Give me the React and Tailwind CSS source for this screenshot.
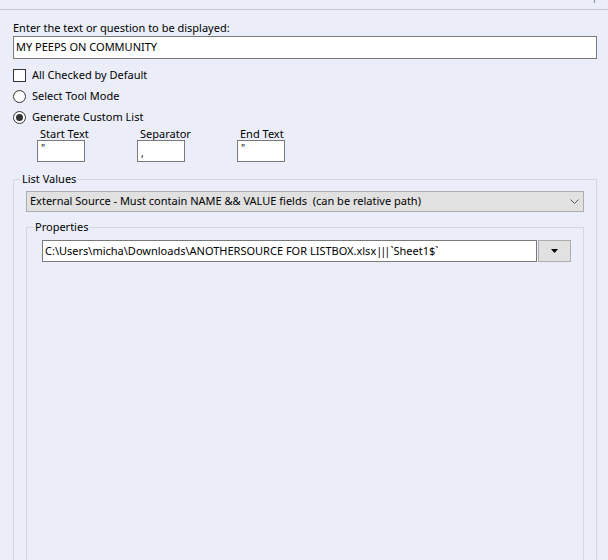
// Custom list settings panel, drawn in the WinForms look:
// prompt field, check/radio options, delimiter boxes and the list-values group.

const FONT = "font-['Segoe_UI','Noto_Sans',sans-serif]";

function CheckRow({ label }) {
  return (
    <label className="flex h-[21px] items-center gap-[6px]">
      <span className="h-[13px] w-[13px] shrink-0 border border-[#333333] bg-white" />
      <span>{label}</span>
    </label>
  );
}

function RadioRow({ label, checked }) {
  return (
    <label className="flex h-[21px] items-center gap-[6px]">
      <span className="flex h-[13px] w-[13px] shrink-0 items-center justify-center rounded-full border border-[#333333] bg-white">
        {checked && <span className="h-[7px] w-[7px] rounded-full bg-[#333333]" />}
      </span>
      <span>{label}</span>
    </label>
  );
}

function SmallField({ label, value, low }) {
  return (
    <div className="flex w-[100px] flex-col">
      <span className="pl-[3px] leading-[12px]">{label}</span>
      <div
        className={`flex h-[22px] w-[48px] border border-[#7a7a7a] bg-white px-[3px] text-[10px] leading-none ${low ? 'items-end pb-[3px]' : 'items-start pt-[2px]'}`}
      >
        {value}
      </div>
    </div>
  );
}

export default function App() {
  return (
    <div className={`h-[560px] overflow-hidden bg-[#ebeef9] text-[11px] text-black ${FONT}`}>
      {/* strip of the parent window above */}
      <div className="flex h-[10px] justify-end border-b border-[#c6cad3] pr-[13px]">
        <span className="h-[3px] w-[1px] bg-[#7d8fb0]" />
      </div>

      <div className="flex flex-col pl-[13px] pr-[11px]">
        <span className="mt-[10px] leading-4">Enter the text or question to be displayed:</span>
        <div className="flex h-[23px] items-center border border-[#7a7a7a] bg-white px-[2px]">
          MY PEEPS ON COMMUNITY
        </div>

        <div className="mt-[6px] flex flex-col">
          <CheckRow label="All Checked by Default" />
          <RadioRow label="Select Tool Mode" />
          <RadioRow label="Generate Custom List" checked />
        </div>

        <div className="flex pl-[24px]">
          <SmallField label="Start Text" value={'"'} />
          <SmallField label="Separator" value="," low />
          <SmallField label="End Text" value={'"'} />
        </div>

        <fieldset className="mt-[9px] h-[420px] border border-[#d4d7dd] p-0">
          <legend className="ml-[7px] px-[1px] leading-4">List Values</legend>
          <div className="flex flex-col px-[12px]">
            <div className="mt-[4px] flex h-[21px] items-center justify-between border border-[#adadad] bg-[#e1e1e1] pl-[3px] pr-[4px]">
              <span className="whitespace-pre">External Source - Must contain NAME &amp;&amp; VALUE fields  (can be relative path)</span>
              <svg width="9" height="6" viewBox="0 0 9 6" fill="none" stroke="#555555" strokeWidth="1">
                <path d="M0.5 0.5 L4.5 4.5 L8.5 0.5" />
              </svg>
            </div>

            <fieldset className="mt-[7px] h-[380px] border border-[#d4d7dd] p-0">
              <legend className="ml-[7px] px-[1px] leading-4">Properties</legend>
              <div className="mt-[5px] flex gap-[1px] pl-[15px] pr-[12px]">
                <div className="flex h-[22px] flex-1 items-center border border-[#7a7a7a] bg-white px-[2px] whitespace-nowrap">
                  C:\Users\micha\Downloads\ANOTHERSOURCE FOR LISTBOX.xlsx
                  <span className="tracking-[-2px]">|||</span>
                  <span className="pl-[2px]">`Sheet1$`</span>
                </div>
                <button
                  type="button"
                  className="flex h-[22px] w-[33px] items-center justify-center border border-[#adadad] bg-[#e1e1e1]"
                >
                  <svg width="7" height="4" viewBox="0 0 7 4">
                    <path d="M0 0 H7 L3.5 4 Z" fill="#000000" />
                  </svg>
                </button>
              </div>
            </fieldset>
          </div>
        </fieldset>
      </div>
    </div>
  );
}
